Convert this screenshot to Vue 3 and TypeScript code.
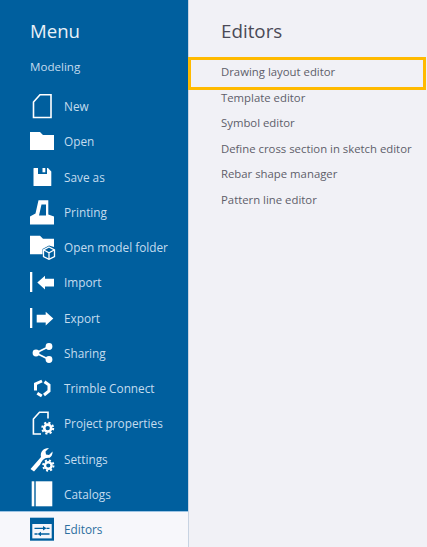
<script setup lang="ts">
interface Item { label: string; icon: string }
const items: Item[] = [
  { label: 'New', icon: 'new' },
  { label: 'Open', icon: 'open' },
  { label: 'Save as', icon: 'save' },
  { label: 'Printing', icon: 'print' },
  { label: 'Open model folder', icon: 'model' },
  { label: 'Import', icon: 'import' },
  { label: 'Export', icon: 'export' },
  { label: 'Sharing', icon: 'share' },
  { label: 'Trimble Connect', icon: 'trimble' },
  { label: 'Project properties', icon: 'project' },
  { label: 'Settings', icon: 'settings' },
  { label: 'Catalogs', icon: 'catalogs' },
  { label: 'Editors', icon: 'editors' },
]
const editors = [
  'Drawing layout editor',
  'Template editor',
  'Symbol editor',
  'Define cross section in sketch editor',
  'Rebar shape manager',
  'Pattern line editor',
]
</script>

<template>
  <div class="app">
    <aside class="side">
      <div class="menu-title">Menu</div>
      <div class="modeling">Modeling</div>
      <ul class="items">
        <li v-for="it in items" :key="it.label" class="item" :class="{ active: it.icon === 'editors' }">
          <svg class="ico" viewBox="0 0 26 26" width="26" height="26">
            <template v-if="it.icon === 'new'">
              <path d="M10 1.800H21V24.500H3.500V9Z" fill="none" stroke="#fff" stroke-width="1.600" />
            </template>
            <template v-else-if="it.icon === 'open'">
              <path d="M0 4H10L13 7H24V22H0Z" fill="#fff" />
            </template>
            <template v-else-if="it.icon === 'save'">
              <path d="M3.500 4.500Q3.500 4 4 4H8V10H17V4H18L21.300 7.500V21.500Q21.300 22 20.800 22H4Q3.500 22 3.500 21.500Z" fill="#fff" />
              <rect x="12.500" y="4" width="2.800" height="4.300" fill="#fff" />
            </template>
            <template v-else-if="it.icon === 'print'">
              <path d="M8.500 1.200H18.300V15.500L24 17.500V25.500H0V17.500L5.500 14.500ZM11.500 5.500H16V16.500H9Z" fill="#fff" fill-rule="evenodd" />
            </template>
            <template v-else-if="it.icon === 'model'">
              <path d="M0 1.700H10L13 4.700H24V13L19 11.500L12.500 15V20.300H0Z" fill="#fff" />
              <path d="M19 13L24.500 15.800V22.500L19 25.300L13.500 22.500V15.800Z" fill="none" stroke="#fff" stroke-width="1.300" />
              <path d="M13.800 16L19 18.800L24.200 16M19 18.800V25" fill="none" stroke="#fff" stroke-width="1.300" />
            </template>
            <template v-else-if="it.icon === 'import'">
              <rect x="0" y="3" width="2.300" height="20" fill="#fff" />
              <path d="M7.300 13.600L15 6.800V9.800H24V17.400H15V20.500Z" fill="#fff" />
            </template>
            <template v-else-if="it.icon === 'export'">
              <rect x="0" y="3" width="2.300" height="20" fill="#fff" />
              <path d="M23.300 13.600L15.700 6.800V9.800H6.700V17.400H15.700V20.500Z" fill="#fff" />
            </template>
            <template v-else-if="it.icon === 'share'">
              <path d="M19 6.500L6 13L19 19.500" fill="none" stroke="#fff" stroke-width="1.800" />
              <circle cx="19" cy="6.500" r="3.400" fill="#fff" />
              <circle cx="6" cy="13" r="3.400" fill="#fff" />
              <circle cx="19" cy="19.500" r="3.400" fill="#fff" />
            </template>
            <template v-else-if="it.icon === 'trimble'">
              <path d="M5.500 15.500V9L12 6M14.500 6.800L19 10V16L14 20M7.300 18.300L11.800 21" fill="none" stroke="#fff" stroke-width="3" />
            </template>
            <template v-else-if="it.icon === 'project'">
              <path d="M18 8.500V2.200H9.500L3.400 9V24H11" fill="none" stroke="#fff" stroke-width="1.600" />
              <circle cx="17.700" cy="18.100" r="3.500" fill="none" stroke="#fff" stroke-width="2.600" />
              <circle cx="17.700" cy="18.100" r="5.500" fill="none" stroke="#fff" stroke-width="2" stroke-dasharray="2.160 2.160" />
            </template>
            <template v-else-if="it.icon === 'settings'">
              <path d="M0.500 23L11 11C10 6 13 2 19 2L15.500 5.500L16 8.500L19 9L22.500 5.500C23 9.500 20 13 15 13L4 25.500Z" fill="#fff" />
              <circle cx="18.300" cy="19.500" r="7.800" fill="#005f9e" />
              <circle cx="18.300" cy="19.500" r="3.300" fill="none" stroke="#fff" stroke-width="2.400" />
              <circle cx="18.300" cy="19.500" r="5.200" fill="none" stroke="#fff" stroke-width="1.900" stroke-dasharray="2.040 2.040" />
            </template>
            <template v-else-if="it.icon === 'catalogs'">
              <rect x="1.700" y="0.300" width="2.600" height="25" fill="#fff" />
              <rect x="5.700" y="0.300" width="16.600" height="25" fill="#fff" />
            </template>
            <template v-else>
              <rect x="0" y="1.700" width="24" height="23" fill="#005f9e" />
              <rect x="2.300" y="8" width="19.400" height="14.400" fill="#f7f7fb" />
              <path d="M4.500 12.300H13M16.500 12.300H19.500M19.500 18H11M7.500 18H4.500" fill="none" stroke="#005f9e" stroke-width="1.300" />
              <path d="M13 10V14.600L16.500 12.300ZM11 15.700V20.300L7.500 18Z" fill="#005f9e" />
            </template>
          </svg>
          <span class="lbl">{{ it.label }}</span>
        </li>
      </ul>
    </aside>
    <main class="main">
      <h1 class="h">Editors</h1>
      <ul class="list">
        <li v-for="(e, i) in editors" :key="e" class="row" :class="{ sel: i === 0 }">{{ e }}</li>
      </ul>
    </main>
  </div>
</template>

<style>
html, body { margin: 0; padding: 0; background: #f1f1f6; }
</style>

<style scoped>
.app {
  display: flex;
  width: 427px;
  height: 547px;
  overflow: hidden;
  font-family: "Open Sans", "Noto Sans", sans-serif;
  background: #f1f1f6;
}
.side {
  width: 189px;
  box-sizing: border-box;
  flex: none;
  background: #005f9e;
  border-right: 1px solid #c8d3e2;
  color: #fff;
  display: flex;
  flex-direction: column;
}
.menu-title {
  font-size: 18.600px;
  line-height: 28px;
  margin: 17px 0 0 30px;
  color: #e9f1f8;
}
.modeling {
  font-size: 11.600px;
  line-height: 18px;
  margin: 13px 0 0 30px;
  color: #c4dcee;
}
.items { list-style: none; margin: 12.500px 0 0; padding: 0; flex: 1; display: flex; flex-direction: column; }
.item {
  height: 35.250px;
  flex: none;
  display: flex;
  align-items: center;
  padding-left: 30px;
  gap: 8px;
}
.ico { flex: none; display: block; }
.lbl { font-size: 11.800px; color: #c4dcee; white-space: nowrap; }
.item.active {
  background: #f7f7fb;
  border-top: 1px solid #9cc4e4;
  margin-top: -1px;
  padding-bottom: 1px;
  flex: 1;
  height: auto;
}
.item.active .lbl { color: #2d6f9f; }
.main { flex: 1; min-width: 0; }
.h {
  font-size: 18.800px;
  font-weight: 400;
  line-height: 28px;
  margin: 17px 0 0 32px;
  color: #4a4a57;
}
.list { list-style: none; margin: 12px 0 0; padding: 0; }
.row {
  height: 25.500px;
  line-height: 25.500px;
  padding-left: 32px;
  font-size: 11.350px;
  color: #5e5e6a;
  box-sizing: border-box;
  white-space: nowrap;
}
.row.sel {
  height: 33px;
  line-height: 24px;
  border: 3px solid #ffba00;
  padding-left: 30px;
  margin: 0 1px -5.300px -1px;
}
</style>
